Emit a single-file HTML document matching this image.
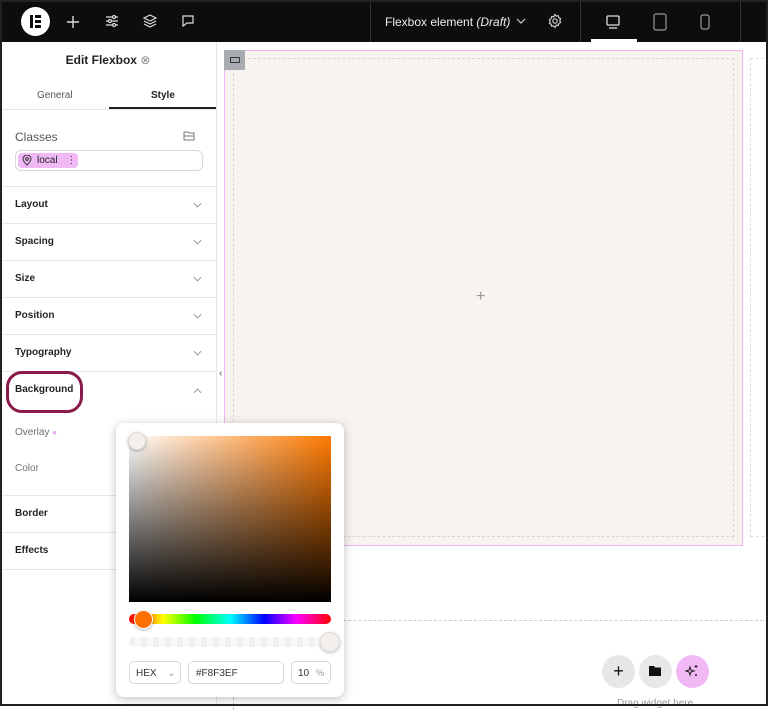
<!DOCTYPE html>
<html><head><meta charset="utf-8"><style>
*{box-sizing:border-box;margin:0;padding:0}
body{width:768px;height:706px;overflow:hidden;background:#fff;font-family:"Liberation Sans",sans-serif;position:relative}
.frame{position:absolute;inset:0;border:2px solid #222;border-top-width:2px;pointer-events:none;z-index:50}
.top{position:absolute;left:0;top:0;width:768px;height:42px;background:#0c0d0e}
.abs{position:absolute}
.side{position:absolute;left:0;top:42px;width:217px;height:664px;background:#fff;border-right:1px solid #e6e6e6}
.row{position:absolute;left:0;width:216px;height:37px;border-top:1px solid #e6e8ea;font-size:10px;font-weight:bold;color:#1f2124;padding:12px 0 0 15px}
.chev{position:absolute;right:15px;top:13px;width:7px;height:7px;border-right:1px solid #888;border-bottom:1px solid #888;transform:rotate(45deg) scale(.8)}
.lbl{font-size:10px;color:#6d7278;position:absolute}
</style></head><body>
<div class="top">
 <div class="abs" style="left:21px;top:7px;width:29px;height:29px;border-radius:50%;background:#fff"></div>
 <div class="abs" style="left:30px;top:15px;width:3px;height:13px;background:#0c0d0e"></div>
 <div class="abs" style="left:35px;top:15px;width:6px;height:3px;background:#0c0d0e"></div>
 <div class="abs" style="left:35px;top:20px;width:6px;height:3px;background:#0c0d0e"></div>
 <div class="abs" style="left:35px;top:25px;width:6px;height:3px;background:#0c0d0e"></div>
 <svg class="abs" style="left:64px;top:13px" width="18" height="18" viewBox="0 0 18 18" fill="none" stroke="#ddd" stroke-width="1.4"><path d="M9 3v12M3 9h12"/></svg>
 <svg class="abs" style="left:104px;top:13px" width="16" height="16" viewBox="0 0 16 16" fill="none" stroke="#ddd" stroke-width="1.2"><path d="M2 4h12M2 8h12M2 12h12"/><circle cx="10" cy="4" r="1.5" fill="#0c0d0e"/><circle cx="6" cy="8" r="1.5" fill="#0c0d0e"/><circle cx="10" cy="12" r="1.5" fill="#0c0d0e"/></svg>
 <svg class="abs" style="left:142px;top:13px" width="16" height="16" viewBox="0 0 16 16" fill="none" stroke="#ddd" stroke-width="1.2"><path d="M8 2l6 3-6 3-6-3z M2 8l6 3 6-3 M2 11l6 3 6-3"/></svg>
 <svg class="abs" style="left:180px;top:13px" width="16" height="16" viewBox="0 0 16 16" fill="none" stroke="#ddd" stroke-width="1.2"><path d="M3 3h10v7H7l-4 3z"/></svg>
 <div class="abs" style="left:370px;top:0;width:1px;height:42px;background:#333"></div>
 <div class="abs" style="left:385px;top:15px;font-size:12px;color:#eee">Flexbox element <i>(Draft)</i></div>
 <svg class="abs" style="left:516px;top:17px" width="10" height="8" viewBox="0 0 10 8" fill="none" stroke="#ccc" stroke-width="1.2"><path d="M1 2l4 4 4-4"/></svg>
 <svg class="abs" style="left:547px;top:13px" width="16" height="16" viewBox="0 0 16 16" fill="none" stroke="#ccc" stroke-width="1.2"><circle cx="8" cy="8" r="2.2"/><path d="M8 1.5l1.3 1.6 2-.4.5 2 1.8 1-.8 1.9.8 1.9-1.8 1-.5 2-2-.4L8 14.5l-1.3-1.6-2 .4-.5-2-1.8-1 .8-1.9-.8-1.9 1.8-1 .5-2 2 .4z"/></svg>
 <div class="abs" style="left:580px;top:0;width:1px;height:42px;background:#333"></div>
 <svg class="abs" style="left:605px;top:14px" width="16" height="16" viewBox="0 0 16 16" fill="none" stroke="#ddd" stroke-width="1.3"><rect x="2" y="2" width="12" height="9" rx="1"/><path d="M4 14h8"/></svg>
 <div class="abs" style="left:591px;top:39px;width:46px;height:3px;background:#fff"></div>
 <svg class="abs" style="left:652px;top:13px" width="16" height="18" viewBox="0 0 16 18" fill="none" stroke="#999" stroke-width="1.2"><rect x="2" y="1" width="12" height="16" rx="2"/></svg>
 <svg class="abs" style="left:699px;top:14px" width="12" height="16" viewBox="0 0 12 16" fill="none" stroke="#999" stroke-width="1.2"><rect x="2" y="1" width="8" height="14" rx="2"/></svg>
 <div class="abs" style="left:740px;top:0;width:1px;height:42px;background:#333"></div>
</div>

<div class="side">
 <div class="abs" style="left:0;top:11px;width:216px;text-align:center;font-size:12px;font-weight:bold;color:#1f2124">Edit Flexbox <span style="color:#888;font-weight:normal">⊗</span></div>
 <div class="abs" style="left:37px;top:48px;font-size:10px;color:#555">General</div>
 <div class="abs" style="left:151px;top:48px;font-size:10px;font-weight:bold;color:#1f2124">Style</div>
 <div class="abs" style="left:0;top:67px;width:216px;height:1px;background:#e6e6e6"></div>
 <div class="abs" style="left:109px;top:65px;width:107px;height:2px;background:#1f2124"></div>
 <div class="abs" style="left:15px;top:88px;font-size:12px;color:#555">Classes</div>
 <svg class="abs" style="left:183px;top:88px" width="12" height="12" viewBox="0 0 12 12" fill="none" stroke="#777" stroke-width="1"><path d="M1 2h4l1 1h5v7H1z M1 6h10"/></svg>
 <div class="abs" style="left:15px;top:108px;width:188px;height:21px;border:1px solid #d5d8dc;border-radius:6px"></div>
 <div class="abs" style="left:18px;top:111px;width:60px;height:15px;background:#f0b9f5;border-radius:4px;font-size:10px;color:#1f2124;padding:2px 0 0 19px">local <span style="margin-left:6px">⋮</span></div>
 <svg class="abs" style="left:22px;top:113px" width="10" height="11" viewBox="0 0 10 11" fill="none" stroke="#333" stroke-width="1"><path d="M5 10C2 7 1 5.5 1 4a4 4 0 018 0c0 1.5-1 3-4 6z"/><circle cx="5" cy="4" r="1.4"/></svg>

 <div class="row" style="top:144px">Layout<span class="chev"></span></div>
 <div class="row" style="top:181px">Spacing<span class="chev"></span></div>
 <div class="row" style="top:218px">Size<span class="chev"></span></div>
 <div class="row" style="top:255px">Position<span class="chev"></span></div>
 <div class="row" style="top:292px">Typography<span class="chev"></span></div>
 <div class="row" style="top:329px;height:124px">Background<span class="chev" style="transform:rotate(-135deg) scale(.8);top:17px"></span></div>
 <div class="abs" style="left:6px;top:329px;width:77px;height:42px;border:3px solid #8a1a4a;border-radius:16px"></div>
 <div class="lbl" style="left:15px;top:385px">Overlay <span style="color:#e9a6f0;font-size:8px">●</span></div>
 <div class="lbl" style="left:15px;top:421px">Color</div>
 <div class="row" style="top:453px">Border</div>
 <div class="row" style="top:490px">Effects</div>
 <div class="abs" style="left:0;top:527px;width:216px;height:1px;background:#e6e8ea"></div>
</div>
<div class="abs" style="left:217px;top:356px;width:12px;height:40px;background:#fff;font-size:10px;color:#555;padding:12px 0 0 2px">‹</div>

<div class="abs" style="left:224px;top:50px;width:519px;height:496px;border:1px solid #f0b4f6;background:#f7f3ef"></div>
<div class="abs" style="left:233px;top:58px;width:501px;height:479px;border:1px dashed #d8d4d0"></div>
<div class="abs" style="left:224px;top:50px;width:21px;height:20px;background:#a8abb0"></div>
<div class="abs" style="left:230px;top:57px;width:10px;height:6px;border:1px solid #333;border-radius:1px"></div>
<div class="abs" style="left:476px;top:288px;font-size:16px;color:#999">+</div>
<div class="abs" style="left:750px;top:58px;width:20px;height:479px;border:1px dashed #ddd;border-right:none"></div>
<div class="abs" style="left:233px;top:620px;width:540px;height:1px;border-top:1px dashed #ccc"></div>
<div class="abs" style="left:233px;top:620px;width:1px;height:90px;border-left:1px dashed #ccc"></div>

<div class="abs" style="left:602px;top:655px;width:33px;height:33px;border-radius:50%;background:#e6e7e9;text-align:center;font-size:18px;line-height:33px;color:#111">+</div>
<div class="abs" style="left:639px;top:655px;width:33px;height:33px;border-radius:50%;background:#e6e7e9"></div>
<svg class="abs" style="left:648px;top:665px" width="14" height="12" viewBox="0 0 14 12"><path d="M1 1h5l1 1.5h6V11H1z" fill="#111"/></svg>
<div class="abs" style="left:676px;top:655px;width:33px;height:33px;border-radius:50%;background:#f0b9f5"></div>
<svg class="abs" style="left:685px;top:664px" width="14" height="14" viewBox="0 0 14 14" fill="none" stroke="#222" stroke-width="1"><path d="M5 3l1 3 3 1-3 1-1 3-1-3-3-1 3-1z"/><path d="M11 1v3M9.5 2.5h3M11 10v2M10 11h2"/></svg>
<div class="abs" style="left:617px;top:698px;font-size:10px;color:#999">Drag widget here</div>

<div class="abs" style="left:116px;top:423px;width:228px;height:274px;background:#fff;border-radius:8px;box-shadow:0 2px 10px rgba(0,0,0,.25)"></div>
<div class="abs" style="left:129px;top:436px;width:202px;height:166px;background:linear-gradient(to top,#000,rgba(0,0,0,0)),linear-gradient(to right,#fff,#ff7a00)"></div>
<div class="abs" style="left:128px;top:432px;width:18px;height:18px;border-radius:50%;background:#f4efeb;border:1px solid #ddd;box-shadow:0 1px 3px rgba(0,0,0,.3)"></div>
<div class="abs" style="left:129px;top:614px;width:202px;height:10px;border-radius:5px;background:linear-gradient(to right,#f00,#ff0 17%,#0f0 33%,#0ff 50%,#00f 67%,#f0f 83%,#f00)"></div>
<div class="abs" style="left:134px;top:610px;width:19px;height:19px;border-radius:50%;background:#ff7000;border:1px solid #fff;box-shadow:0 1px 3px rgba(0,0,0,.3)"></div>
<div class="abs" style="left:129px;top:637px;width:202px;height:10px;border-radius:5px;background:repeating-linear-gradient(90deg,#f3f1ef 0 6px,#fbfaf9 6px 12px)"></div>
<div class="abs" style="left:320px;top:632px;width:20px;height:20px;border-radius:50%;background:#f4efeb;border:1px solid #ddd;box-shadow:0 1px 3px rgba(0,0,0,.25)"></div>
<div class="abs" style="left:129px;top:661px;width:52px;height:23px;border:1px solid #d5d8dc;border-radius:5px;font-size:10px;color:#333;padding:6px 0 0 6px">HEX <span style="color:#999;margin-left:8px">⌄</span></div>
<div class="abs" style="left:188px;top:661px;width:96px;height:23px;border:1px solid #d5d8dc;border-radius:5px;font-size:10px;color:#333;padding:6px 0 0 7px">#F8F3EF</div>
<div class="abs" style="left:291px;top:661px;width:40px;height:23px;border:1px solid #d5d8dc;border-radius:5px;font-size:10px;color:#333;padding:6px 0 0 6px">10<span style="color:#999;margin-left:7px;font-size:9px">%</span></div>

<div class="frame"></div>
</body></html>
